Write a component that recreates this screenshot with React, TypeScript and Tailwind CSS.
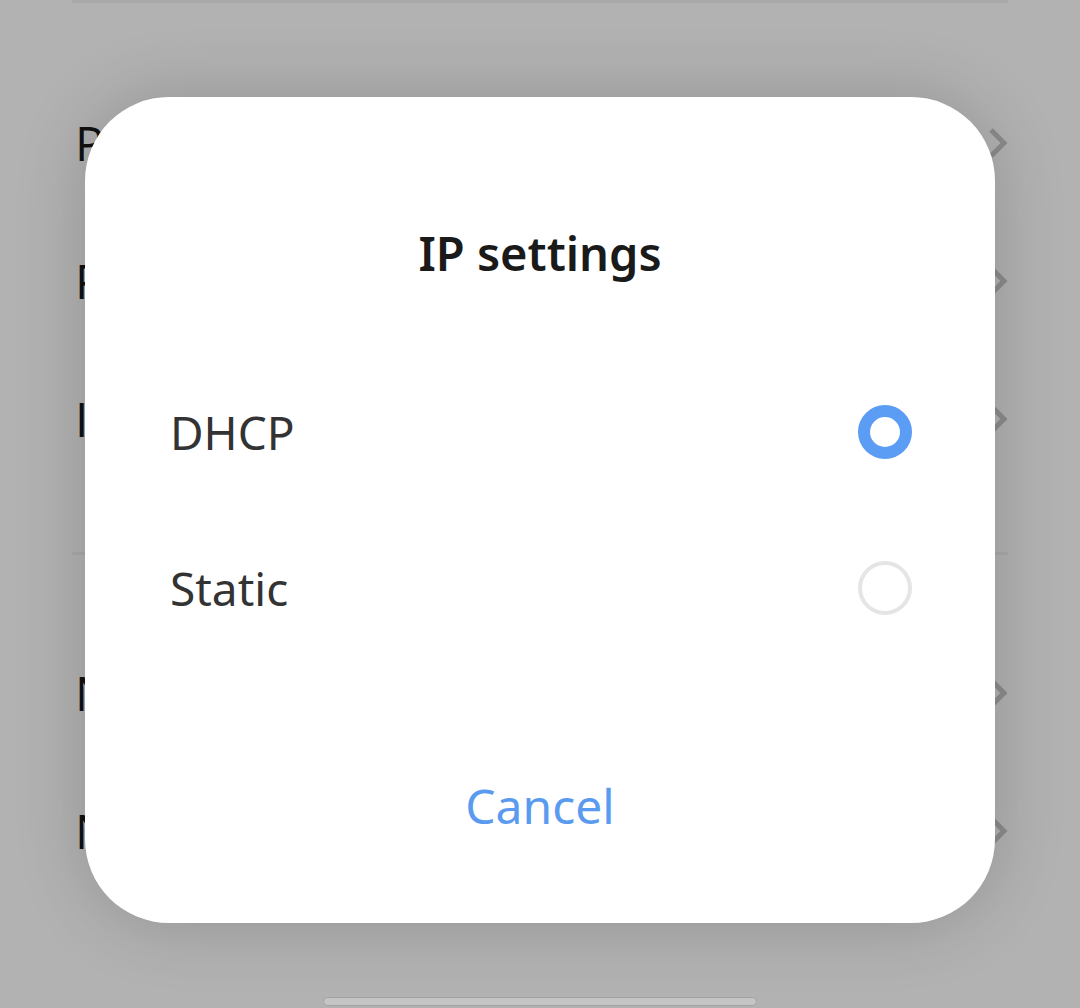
import React from "react"

const font = { fontFamily: '"Noto Sans", "Open Sans", sans-serif' }

function Chevron() {
  return (
    <svg width="20" height="32" viewBox="0 0 20 32" fill="none">
      <path d="M3 3 L16 16 L3 29" stroke="#8c8c8c" strokeWidth="5" />
    </svg>
  )
}

function BgRow({ label }: { label: string }) {
  return (
    <div className="flex h-[138px] items-center justify-between">
      <span className="pl-[3px] font-['Open_Sans',sans-serif] text-[48px] text-[#111]">{label}</span>
      <Chevron />
    </div>
  )
}

function Radio({ checked }: { checked: boolean }) {
  return checked ? (
    <div className="h-[54px] w-[54px] rounded-full border-[12px] border-[#5b9cf5] bg-white" />
  ) : (
    <div className="h-[54px] w-[54px] rounded-full border-[4px] border-[#e5e5e5] bg-white" />
  )
}

export default function App() {
  return (
    <div className="relative h-[1008px] w-[1080px] overflow-hidden bg-[#b2b2b2]" style={font}>
      <div className="px-[72px]">
        <div className="h-[3px] bg-[#a9a9a9]" />
        <div className="mt-[71px]">
          <BgRow label="Proxy" />
          <BgRow label="Privacy" />
          <BgRow label="IP" />
        </div>
        <div className="mt-[64px] h-[3px] bg-[#aaaaaa]" />
        <div className="mt-[69px]">
          <BgRow label="Network" />
          <BgRow label="Network" />
        </div>
      </div>

      <div className="absolute left-[85px] top-[97px] flex h-[826px] w-[910px] flex-col rounded-[84px] bg-white shadow-[0_0_70px_rgba(0,0,0,0.18)]">
        <div className="mt-[126px] flex h-[60px] items-center justify-center text-[47px] font-semibold text-[#1a1a1a]">
          IP settings
        </div>
        <div className="mt-[71px] flex h-[156px] items-center justify-between pl-[85px] pr-[83px]">
          <span className="text-[46px] text-[#333]">DHCP</span>
          <Radio checked />
        </div>
        <div className="flex h-[156px] items-center justify-between pl-[85px] pr-[83px]">
          <span className="text-[46px] text-[#333]">Static</span>
          <Radio checked={false} />
        </div>
        <div className="mt-[110px] flex h-[60px] items-center justify-center text-[48px] text-[#5a9bf0]">
          Cancel
        </div>
      </div>

      <div className="absolute left-[323px] top-[997px] h-[9px] w-[434px] rounded-full border border-[#a2a2a2] bg-[#c5c5c5]" />
    </div>
  )
}
